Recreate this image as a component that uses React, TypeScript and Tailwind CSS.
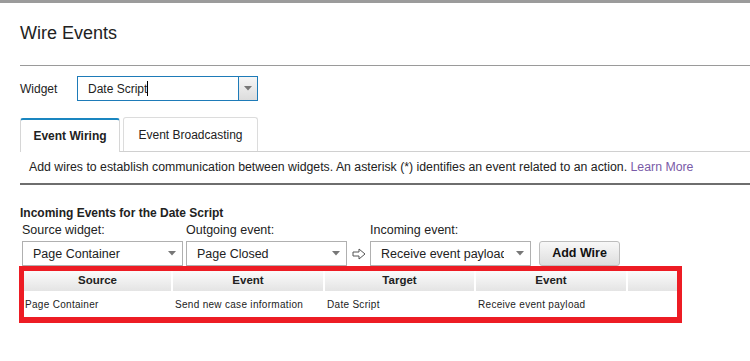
import React from "react";

const Caret = () => (
  <svg width="8" height="5" viewBox="0 0 8 5" className="block">
    <path d="M0 0 H8 L4 4.5 Z" fill="#777" />
  </svg>
);

const Select = ({ value, textWidth }: { value: string; textWidth?: string }) => (
  <div className="w-[161px] h-[25px] border border-[#b0b0b0] bg-white flex items-center">
    <span className={`pl-[10px] text-[12.5px] leading-[16px] whitespace-nowrap overflow-hidden ${textWidth ?? "flex-1"}`}>
      {value}
    </span>
    <span className="ml-auto mr-[6px]">
      <Caret />
    </span>
  </div>
);

export default function App() {
  const headers = ["Source", "Event", "Target", "Event", ""];
  const row = ["Page Container", "Send new case information", "Date Script", "Receive event payload", ""];
  const widths = ["w-[147px]", "w-[150px]", "w-[149px]", "w-[150px]", "w-[49px]"];
  return (
    <div className="w-[750px] h-[361px] overflow-hidden bg-white text-[#222] font-['Liberation_Sans',Arial,sans-serif]">
      <div className="h-[3px] bg-[#9b9b9b]" />
      <div className="pl-[20px]">
        <h1 className="pt-[18px] text-[18px] leading-[24px] h-[44px] font-normal">Wire Events</h1>
        <div className="mt-[18px] border-t border-[#9a9a9a]" />

        <div className="mt-[10px] flex items-center h-[25px]">
          <span className="w-[57px] text-[12px]">Widget</span>
          <div className="w-[181px] h-[25px] border border-[#1e7bb8] flex bg-white">
            <div className="flex-1 flex items-center pl-[10px] text-[12px]">
              <span>Date Script</span>
              <span className="w-[1px] h-[15px] bg-black ml-[0px]" />
            </div>
            <div className="w-[19px] border-l border-[#1e7bb8] bg-gradient-to-b from-[#f6f6f6] to-[#dcdcdc] flex items-center justify-center">
              <Caret />
            </div>
          </div>
        </div>

        <div className="mt-[17px] flex items-end h-[34px] border-b border-[#d0d0d0]">
          <div className="w-[100px] h-[34px] -mb-px bg-white border-t-2 border-x border-t-[#1a86c0] border-x-[#d6d6d6] rounded-t-[3px] flex items-center justify-center text-[12px] font-bold pb-[1px]">
            Event Wiring
          </div>
          <div className="ml-[3px] w-[135px] h-[34px] border border-b-0 border-[#dcdcdc] rounded-t-[3px] flex items-center justify-center text-[12px] bg-white">
            Event Broadcasting
          </div>
        </div>

        <div className="h-[33px] flex items-center pl-[9px] text-[12.3px] border-b-2 border-[#6e6e6e] whitespace-nowrap">
          Add wires to establish communication between widgets. An asterisk (*) identifies an event related to an action.&nbsp;
          <span className="text-[#7a5ba8]">Learn More</span>
        </div>

        <div className="mt-[20px] text-[12px] font-bold leading-[16px]">Incoming Events for the Date Script</div>

        <div className="mt-[1px] ml-[2px] flex items-end">
          <div className="flex flex-col">
            <span className="text-[12.5px] leading-[16px] mb-[3px]">Source widget:</span>
            <Select value="Page Container" />
          </div>
          <div className="flex flex-col ml-[3px]">
            <span className="text-[12.5px] leading-[16px] mb-[3px]">Outgoing event:</span>
            <Select value="Page Closed" />
          </div>
          <div className="w-[23px] h-[25px] flex items-center justify-center">
            <svg width="14" height="12" viewBox="0 0 14 12">
              <path d="M1 4 H7 V1 L13 6 L7 11 V8 H1 Z" fill="white" stroke="#555" strokeWidth="1" strokeLinejoin="miter" />
            </svg>
          </div>
          <div className="flex flex-col">
            <span className="text-[12.5px] leading-[16px] mb-[3px]">Incoming event:</span>
            <Select value="Receive event payload" textWidth="w-[133px]" />
          </div>
          <button className="ml-[8px] w-[81px] h-[25px] border border-[#bdbdbd] rounded-[3px] bg-gradient-to-b from-[#f8f8f8] to-[#dedede] text-[12.5px] font-bold text-[#111]">
            Add Wire
          </button>
        </div>

        <div className="-ml-px w-[663px] border-[5px] border-b-[6px] border-[#ed1c24]">
          <div className="flex gap-[2px] h-[20px]">
            {headers.map((h, i) => (
              <div
                key={i}
                className={`${widths[i]} bg-gradient-to-b from-[#fbfbfb] to-[#e4e4e4] flex items-center justify-center text-[11.5px] font-bold text-[#222]`}
              >
                {h}
              </div>
            ))}
          </div>
          <div className="flex gap-[2px] h-[26px] bg-white">
            {row.map((c, i) => (
              <div
                key={i}
                className={`${widths[i]} flex items-center pt-[1px] ${i === 0 ? "pl-[1px]" : "pl-[2px]"} text-[10px] tracking-[0.3px] whitespace-nowrap text-[#222]`}
              >
                {c}
              </div>
            ))}
          </div>
        </div>
      </div>
    </div>
  );
}
